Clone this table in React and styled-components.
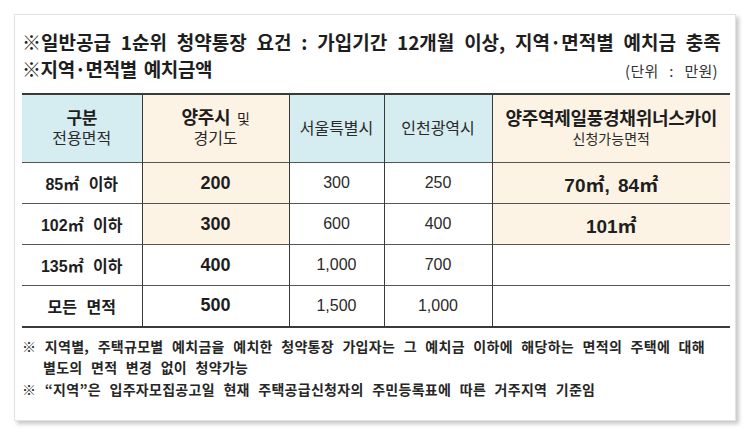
import React from "react";
import styled, { createGlobalStyle } from "styled-components";

const KR = `"Noto Sans CJK KR", "Liberation Sans", sans-serif`;
const NUM = `"Liberation Sans", "Noto Sans CJK KR", sans-serif`;

const colors = {
  ink: "#1e1e1e",
  line: "#3a3a3a",
  blue: "#d5ecf1",
  cream: "#fdf3e4",
};

const GlobalStyle = createGlobalStyle`
  html, body {
    margin: 0;
    padding: 0;
    background: #ffffff;
  }
  body {
    font-family: ${KR};
    color: ${colors.ink};
  }
`;

const rows = [
  { label: "85㎡ 이하", yj: "200", seoul: "300", incheon: "250", area: "70㎡, 84㎡", hl: true },
  { label: "102㎡ 이하", yj: "300", seoul: "600", incheon: "400", area: "101㎡", hl: true },
  { label: "135㎡ 이하", yj: "400", seoul: "1,000", incheon: "700", area: "", hl: false },
  { label: "모든 면적", yj: "500", seoul: "1,500", incheon: "1,000", area: "", hl: false },
];

const App = () => {
  return (
    <>
      <GlobalStyle />
      <Page>
        <Card>
          <Title $wide>※일반공급 1순위 청약통장 요건 : 가입기간 12개월 이상, 지역·면적별 예치금 충족</Title>
          <SubRow>
            <Title>※지역·면적별 예치금액</Title>
            <Unit>(단위 : 만원)</Unit>
          </SubRow>
          <Table>
            <colgroup>
              <col style={{ width: 120 }} />
              <col style={{ width: 147 }} />
              <col style={{ width: 95 }} />
              <col style={{ width: 108 }} />
              <col />
            </colgroup>
            <thead>
              <tr>
                <Th $bg={colors.blue}>
                  <Strong>구분</Strong>
                  <Light>전용면적</Light>
                </Th>
                <Th $bg={colors.cream}>
                  <Strong $size={18}>
                    양주시 <Small>및</Small>
                  </Strong>
                  <Light>경기도</Light>
                </Th>
                <Th $bg={colors.blue}>
                  <Light>서울특별시</Light>
                </Th>
                <Th $bg={colors.blue}>
                  <Light>인천광역시</Light>
                </Th>
                <Th $bg={colors.cream}>
                  <Strong $size={18}>양주역제일풍경채위너스카이</Strong>
                  <Light $size={14}>신청가능면적</Light>
                </Th>
              </tr>
            </thead>
            <tbody>
              {rows.map((r) => (
                <tr key={r.label}>
                  <Label>{r.label}</Label>
                  <Main $bg={r.hl ? colors.cream : "#fff"}>{r.yj}</Main>
                  <Value>{r.seoul}</Value>
                  <Value>{r.incheon}</Value>
                  <Area $bg={r.hl ? colors.cream : "#fff"}>{r.area}</Area>
                </tr>
              ))}
            </tbody>
          </Table>
          <Notes>
            <Note>※ 지역별, 주택규모별 예치금을 예치한 청약통장 가입자는 그 예치금 이하에 해당하는 면적의 주택에 대해</Note>
            <Note $indent>별도의 면적 변경 없이 청약가능</Note>
            <Note>※ “지역”은 입주자모집공고일 현재 주택공급신청자의 주민등록표에 따른 거주지역 기준임</Note>
          </Notes>
        </Card>
      </Page>
    </>
  );
};

const Page = styled.div`
  width: 749px;
  height: 431px;
  padding: 14px 0 0 14px;
  box-sizing: border-box;
  overflow: hidden;
`;

const Card = styled.div`
  position: relative;
  width: 722px;
  height: 407px;
  box-sizing: border-box;
  border: 1px solid #e2e2e2;
  background: #fff;
  padding: 13px 7px 0 7px;
  box-shadow: 3px 3px 4px rgba(0, 0, 0, 0.22);
  &::before {
    content: "";
    position: absolute;
    left: -9px;
    top: -9px;
    width: 110px;
    height: 110px;
    background: linear-gradient(135deg, rgba(0, 0, 0, 0.18), rgba(0, 0, 0, 0) 60%);
    z-index: -1;
    filter: blur(2px);
  }
`;

const Title = styled.div`
  font-family: ${KR};
  font-size: 19px;
  font-weight: 700;
  line-height: 27px;
  letter-spacing: ${(p) => (p.$wide ? "0" : "-0.4px")};
  word-spacing: ${(p) => (p.$wide ? "5.5px" : "3px")};
  white-space: nowrap;
`;

const SubRow = styled.div`
  display: flex;
  align-items: flex-end;
  justify-content: space-between;
  padding-right: 10px;
`;

const Unit = styled.div`
  font-family: ${KR};
  font-size: 15px;
  line-height: 22px;
  color: #333;
  word-spacing: 7px;
  letter-spacing: 0.3px;
`;

const Table = styled.table`
  margin-top: 11px;
  width: 708px;
  border-collapse: collapse;
  table-layout: fixed;
  border-top: 2px solid ${colors.line};
  border-bottom: 2px solid ${colors.line};
  td,
  th {
    border-left: 1px solid ${colors.line};
    border-top: 1px solid #555;
    text-align: center;
    vertical-align: middle;
    padding: 0;
  }
  td:first-child,
  th:first-child {
    border-left: none;
  }
  tbody tr {
    height: 41px;
  }
`;

const Th = styled.th`
  height: 67px;
  background: ${(p) => p.$bg};
  font-weight: 400;
`;

const Strong = styled.div`
  font-family: ${NUM};
  font-weight: 700;
  font-size: ${(p) => p.$size || 17}px;
  line-height: 20px;
  letter-spacing: -0.3px;
  word-spacing: 2px;
`;

const Small = styled.span`
  font-weight: 400;
  font-size: 14px;
`;

const Light = styled.div`
  font-family: ${NUM};
  font-weight: 400;
  font-size: ${(p) => p.$size || 16}px;
  line-height: 20px;
  color: #2a2a2a;
`;

const Label = styled.td`
  font-family: ${NUM};
  font-weight: 700;
  font-size: 16px;
  word-spacing: 5px;
`;

const Main = styled.td`
  background: ${(p) => p.$bg};
  font-family: ${NUM};
  font-weight: 700;
  font-size: 18px;
`;

const Value = styled.td`
  font-family: ${NUM};
  font-size: 16px;
  color: #2a2a2a;
`;

const Area = styled.td`
  background: ${(p) => p.$bg};
  font-family: ${NUM};
  font-weight: 700;
  font-size: 19px;
  word-spacing: 3px;
`;

const Notes = styled.div`
  margin-top: 8px;
`;

const Note = styled.div`
  font-family: ${KR};
  font-weight: 700;
  font-size: 14px;
  line-height: 21.5px;
  color: #262626;
  white-space: nowrap;
  letter-spacing: 0.3px;
  word-spacing: 5px;
  padding-left: ${(p) => (p.$indent ? "21px" : "0")};
`;

export default App;
